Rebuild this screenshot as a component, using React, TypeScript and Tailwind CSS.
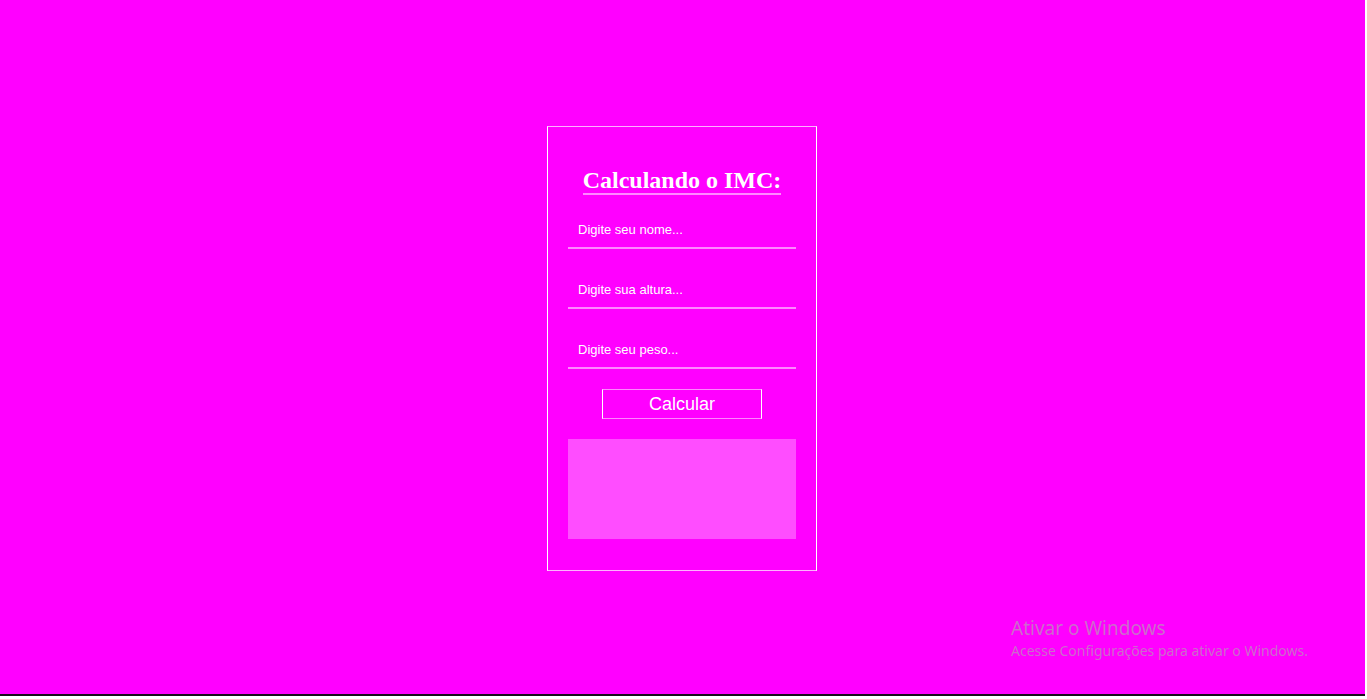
import type { JSX } from "react";

function App(): JSX.Element {
    const campos = ["Digite seu nome...", "Digite sua altura...", "Digite seu peso..."];

    return (
        <div className="w-[1367px] h-[699px] bg-white overflow-hidden">
            {/* Área da página */}
            <div className="relative w-[1365px] h-[696px] bg-[#ff00ff] border-b-2 border-[#1a0a1a] flex items-center justify-center">
                <div className="w-[270px] h-[445px] mt-[2px] mr-[1px] border-x border-x-white border-y border-y-[#ffb0ff] px-[20px] pt-[40px] flex flex-col">
                    <div className="flex justify-center">
                        <h1 className="inline-block text-white text-[24px] leading-[26px] font-bold border-b-2 border-[#ff88ff] font-['Liberation_Serif',serif]">
                            Calculando o IMC:
                        </h1>
                    </div>

                    <div className="mt-[14px] flex flex-col gap-[20px]">
                        {campos.map((campo) => (
                            <input
                                key={campo}
                                type="text"
                                placeholder={campo}
                                className="w-full h-[40px] pt-[3px] px-[10px] bg-transparent border-b-2 border-[#ff88ff] text-white text-[13px] placeholder:text-white outline-none font-['Liberation_Sans',sans-serif]"
                            />
                        ))}
                    </div>

                    <div className="mt-[20px] flex justify-center">
                        <button className="w-[160px] h-[30px] border-x border-x-white border-y border-y-[#ff88ff] text-white text-[18px] leading-none font-['Liberation_Sans',sans-serif]">
                            Calcular
                        </button>
                    </div>

                    <div className="mt-[20px] h-[100px] bg-[#ff4dff]"></div>
                </div>

                {/* Marca d'água do Windows */}
                <div className="absolute left-[1011px] top-[614px] text-[#cc6acc] font-['Noto_Sans',sans-serif] pointer-events-none">
                    <p className="text-[19px] leading-[28px]">Ativar o Windows</p>
                    <p className="text-[14px] leading-[18px]">Acesse Configurações para ativar o Windows.</p>
                </div>
            </div>
        </div>
    );
}

export default App;
